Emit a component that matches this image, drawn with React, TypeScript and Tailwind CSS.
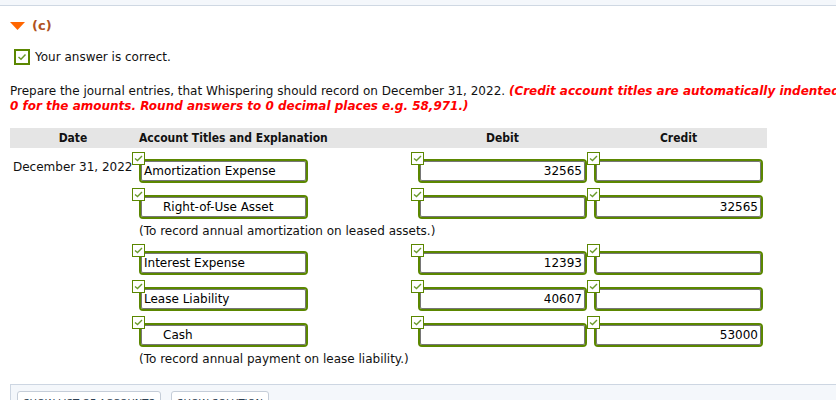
import React from "react";

function SmallCheck() {
  return (
    <div className="absolute left-0 top-0 z-10 w-[13px] h-[13px] bg-white border border-[#5b8700] flex items-center justify-center">
      <svg width="9" height="7" viewBox="0 0 9 7">
        <polyline points="1,3.5 3.5,5.5 8,1" fill="none" stroke="#6a9a2a" strokeWidth="1.4" />
      </svg>
    </div>
  );
}

function Field({ text, align = "left", indent = false }: { text?: string; align?: "left" | "right"; indent?: boolean }) {
  return (
    <div className="relative w-[176px] h-[31px] shrink-0">
      <SmallCheck />
      <div
        className={
          "absolute left-[7px] top-[7px] w-[169px] h-[24px] rounded-[4px] border-[2px] border-[#5b8700] bg-white shadow-[inset_0_0_0_1px_#767676] flex items-center text-[12px] text-black whitespace-nowrap " +
          (align === "right" ? "justify-end pr-[3px]" : indent ? "pl-[22px]" : "pl-[3px]")
        }
      >
        {text}
      </div>
    </div>
  );
}

function Row({ date, account, indent, debit, credit, last }: { date?: string; account: string; indent?: boolean; debit?: string; credit?: string; last?: boolean }) {
  return (
    <div className={"flex items-start " + (last ? "" : "mb-[5px]")}>
      <div className="w-[122px] pl-[3px] pt-[8px] leading-[15px] text-[12px] whitespace-nowrap shrink-0">{date}</div>
      <Field text={account} indent={indent} />
      <div className="w-[103px] shrink-0" />
      <Field text={debit} align="right" />
      <Field text={credit} align="right" />
    </div>
  );
}

export default function App() {
  return (
    <div
      className="w-[836px] h-[400px] overflow-hidden bg-white relative text-[#111]"
      style={{ fontFamily: '"DejaVu Sans", Verdana, sans-serif' }}
    >
      <div className="h-[6px] bg-[#f4f7fb] border-b border-[#cfd8e3]" />

      <div className="flex items-center h-[16px] mt-[12px] pl-[10px]">
        <svg width="15" height="8" viewBox="0 0 15 8">
          <polygon points="0,0 15,0 7.5,8" fill="#ff6600" />
        </svg>
        <span className="ml-[7px] text-[13px] font-bold text-[#b0521f]">(c)</span>
      </div>

      <div className="flex items-center h-[16px] mt-[15px] pl-[14px]">
        <div className="w-[16px] h-[16px] border-[2px] border-[#5b8700] bg-white flex items-center justify-center">
          <svg width="10" height="8" viewBox="0 0 10 8">
            <polyline points="1.5,4 4,6.2 8.5,1.5" fill="none" stroke="#6a9a2a" strokeWidth="1.5" />
          </svg>
        </div>
        <span className="ml-[5px] text-[12px]">Your answer is correct.</span>
      </div>

      <div className="mt-[19px] pl-[10px] text-[12px] leading-[15px] whitespace-nowrap">
        Prepare the journal entries, that Whispering should record on December 31, 2022.{" "}
        <span className="text-[#ff0000] font-bold italic">
          (Credit account titles are automatically indented when amount is entered. Do not indent manually.
        </span>
        <br />
        <span className="text-[#ff0000] font-bold italic">
          0 for the amounts. Round answers to 0 decimal places e.g. 58,971.)
        </span>
      </div>

      <div
        className="ml-[10px] mt-[14px] w-[757px] h-[20px] bg-[#e5e5e5] flex items-center text-[12px] font-bold text-[#111]"
        style={{ fontFamily: '"DejaVu Sans Condensed", "DejaVu Sans", sans-serif', fontStretch: "condensed" }}
      >
        <div className="w-[126px] text-center">Date</div>
        <div className="w-[282px] pl-[3px]">Account Titles and Explanation</div>
        <div className="w-[169px] text-center">Debit</div>
        <div className="w-[7px]" />
        <div className="w-[169px] text-center">Credit</div>
      </div>

      <div className="ml-[10px] mt-[4px]">
        <Row date="December 31, 2022" account="Amortization Expense" debit="32565" />
        <Row account="Right-of-Use Asset" indent credit="32565" last />
        <div className="h-[25px] pt-[5px] pl-[129px] text-[12px] leading-[15px] whitespace-nowrap">
          (To record annual amortization on leased assets.)
        </div>
        <Row account="Interest Expense" debit="12393" />
        <Row account="Lease Liability" debit="40607" />
        <Row account="Cash" indent credit="53000" last />
        <div className="h-[25px] pt-[5px] pl-[129px] text-[12px] leading-[15px] whitespace-nowrap">
          (To record annual payment on lease liability.)
        </div>
      </div>

      <div className="ml-[10px] mt-[12px] h-[40px] border-t border-l border-[#cdd6e2] bg-[#f4f7fb] pt-[6px] pl-[6px] flex gap-[10px]">
        <div className="w-[144px] h-[22px] rounded-[3px] border border-[#c5cdd8] bg-white text-[10px] text-[#2c3e50] text-center pt-[4px] whitespace-nowrap">
          SHOW LIST OF ACCOUNTS
        </div>
        <div className="w-[98px] h-[22px] rounded-[3px] border border-[#c5cdd8] bg-white text-[10px] text-[#2c3e50] text-center pt-[4px] whitespace-nowrap">
          SHOW SOLUTION
        </div>
      </div>
    </div>
  );
}
